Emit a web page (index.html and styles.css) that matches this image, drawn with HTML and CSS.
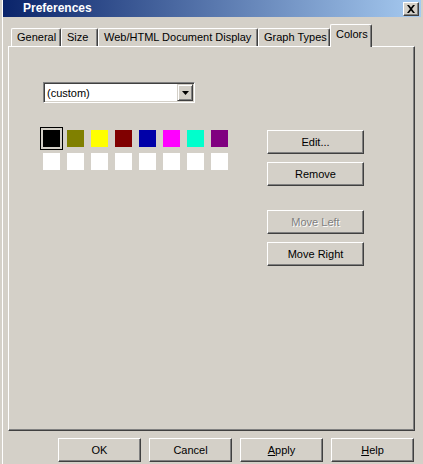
FILE: index.html
```html
<!DOCTYPE html>
<html>
<head>
<meta charset="utf-8">
<title>Preferences</title>
<link rel="stylesheet" href="styles.css">
</head>
<body>
<div class="window">
  <div class="titlebar">
    <span class="title">Preferences</span>
    <span class="close">
      <svg width="14" height="12" viewBox="0 0 14 12"><path d="M3 2h2l2 2.5 2-2.5h2l-3 4 3 4h-2l-2-2.5-2 2.5h-2l3-4z" fill="#000"/></svg>
    </span>
  </div>
  <div class="tabs">
    <div class="tab tab-general">General</div>
    <div class="tab tab-size">Size</div>
    <div class="tab tab-web">Web/HTML Document Display</div>
    <div class="tab tab-graph">Graph Types</div>
    <div class="tab tab-colors active">Colors</div>
  </div>
  <div class="panel">
    <div class="combo">
      <span class="combo-text">(custom)</span>
      <span class="combo-btn"><svg width="7" height="4" viewBox="0 0 7 4"><path d="M0 0h7l-3.5 4z" fill="#000"/></svg></span>
    </div>
    <div class="colors-row">
      <div class="swatches">
        <span class="sw sel c-black"></span>
        <span class="sw c-olive"></span>
        <span class="sw c-yellow"></span>
        <span class="sw c-maroon"></span>
        <span class="sw c-blue"></span>
        <span class="sw c-magenta"></span>
        <span class="sw c-aqua"></span>
        <span class="sw c-purple"></span>
        <span class="sw"></span>
        <span class="sw"></span>
        <span class="sw"></span>
        <span class="sw"></span>
        <span class="sw"></span>
        <span class="sw"></span>
        <span class="sw"></span>
        <span class="sw"></span>
      </div>
      <div class="actions">
        <button class="btn btn-side">Edit...</button>
        <button class="btn btn-side gap-s">Remove</button>
        <button class="btn btn-side gap-l disabled">Move Left</button>
        <button class="btn btn-side gap-s">Move Right</button>
      </div>
    </div>
  </div>
  <div class="footer">
    <button class="btn btn-foot">OK</button>
    <button class="btn btn-foot">Cancel</button>
    <button class="btn btn-foot"><u>A</u>pply</button>
    <button class="btn btn-foot"><u>H</u>elp</button>
  </div>
</div>
</body>
</html>
```

FILE: styles.css
```css
html, body {
  margin: 0;
  padding: 0;
}
body {
  background: #d4d0c8;
  font-family: "Liberation Sans", Arial, sans-serif;
  font-size: 11px;
  color: #000;
}
.window {
  width: 423px;
  height: 464px;
  box-sizing: border-box;
  padding: 0 2px 0 3px;
  overflow: hidden;
  box-shadow: inset 2px 0 0 #d4d0c8, inset 3px 0 0 #ffffff;
}
.titlebar {
  height: 17px;
  display: flex;
  align-items: center;
  background: linear-gradient(to right, #0a246a, #a6caf0);
  color: #fff;
  padding-left: 20px;
}
.title {
  font-weight: bold;
  font-size: 12px;
  line-height: 17px;
}
.close {
  margin-left: auto;
  margin-right: 2px;
  width: 16px;
  height: 14px;
  box-sizing: border-box;
  background: #d4d0c8;
  border: 1px solid;
  border-color: #fff #404040 #404040 #fff;
  box-shadow: inset -1px -1px 0 #808080;
  display: flex;
  align-items: center;
  justify-content: center;
}
.close svg {
  display: block;
}
.tabs {
  margin-top: 7px;
  height: 22px;
  display: flex;
  align-items: flex-end;
  padding-left: 8px;
}
.tab {
  height: 18px;
  box-sizing: border-box;
  border-top: 1px solid #fff;
  border-left: 1px solid #fff;
  border-right: 1px solid #404040;
  border-top-left-radius: 2px;
  border-top-right-radius: 2px;
  box-shadow: inset -1px 0 0 #808080;
  padding: 1px 0 0 5px;
  line-height: 14px;
  white-space: nowrap;
  background: #d4d0c8;
}
.tab-general { width: 50px; }
.tab-size { width: 37px; }
.tab-web { width: 160px; }
.tab-graph { width: 72px; }
.tab-colors { width: 42px; }
.tab.active {
  height: 23px;
  margin-bottom: -1px;
  padding-top: 2px;
  position: relative;
  z-index: 1;
}
.panel {
  margin-left: 5px;
  width: 407px;
  height: 385px;
  box-sizing: border-box;
  border-top: 1px solid #fff;
  border-left: 1px solid #fff;
  border-right: 1px solid #404040;
  border-bottom: 1px solid #404040;
  box-shadow: inset -1px -1px 0 #808080;
  padding: 35px 0 0 34px;
}
.combo {
  width: 152px;
  height: 21px;
  box-sizing: border-box;
  background: #fff;
  border: 1px solid;
  border-color: #808080 #fff #fff #808080;
  box-shadow: inset 1px 1px 0 #404040, inset -1px -1px 0 #d4d0c8;
  display: flex;
  align-items: center;
  padding: 1px 1px 1px 3px;
}
.combo-text {
  flex: 1;
  line-height: 14px;
}
.combo-btn {
  width: 16px;
  height: 17px;
  box-sizing: border-box;
  background: #d4d0c8;
  border: 1px solid;
  border-color: #d4d0c8 #404040 #404040 #d4d0c8;
  box-shadow: inset 1px 1px 0 #fff, inset -1px -1px 0 #808080;
  display: flex;
  align-items: center;
  justify-content: center;
}
.combo-btn svg {
  display: block;
}
.colors-row {
  margin-top: 27px;
  display: flex;
  align-items: flex-start;
}
.swatches {
  display: grid;
  grid-template-columns: repeat(8, 17px);
  grid-auto-rows: 17px;
  column-gap: 7px;
  row-gap: 6px;
}
.sw {
  display: block;
  background: #fff;
}
.sw.sel {
  outline: 1px solid #000;
  outline-offset: 2px;
}
.c-black { background: #000000; }
.c-olive { background: #808000; }
.c-yellow { background: #ffff00; }
.c-maroon { background: #800000; }
.c-blue { background: #0000a8; }
.c-magenta { background: #ff00ff; }
.c-aqua { background: #00ffcc; }
.c-purple { background: #800080; }
.actions {
  margin-left: 39px;
  display: flex;
  flex-direction: column;
}
.btn {
  font-family: "Liberation Sans", Arial, sans-serif;
  font-size: 11px;
  color: #000;
  background: #d4d0c8;
  border: 1px solid;
  border-color: #fff #404040 #404040 #fff;
  box-shadow: inset -1px -1px 0 #808080;
  border-radius: 0;
  padding: 0;
  margin: 0;
  height: 24px;
  box-sizing: border-box;
  line-height: 14px;
  text-align: center;
}
.btn-side {
  width: 97px;
}
.gap-s {
  margin-top: 8px;
}
.gap-l {
  margin-top: 24px;
}
.btn.disabled {
  color: #808080;
  text-shadow: 1px 1px 0 #fff;
}
.btn u {
  text-decoration: underline;
}
.footer {
  margin-top: 7px;
  display: flex;
  justify-content: flex-end;
  gap: 8px;
  padding-right: 7px;
}
.btn-foot {
  width: 83px;
}
```
